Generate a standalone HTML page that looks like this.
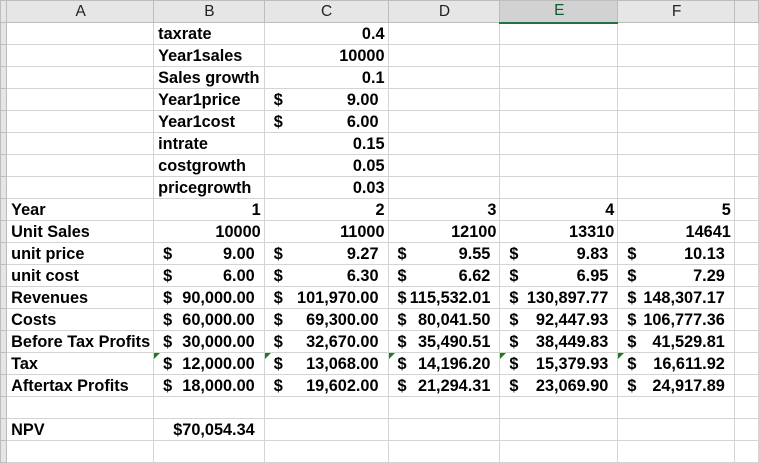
<!DOCTYPE html>
<html><head><meta charset="utf-8"><style>
*{margin:0;padding:0;box-sizing:border-box}
body{width:759px;height:463px;overflow:hidden;background:#fff;font-family:"Liberation Sans",Arial,sans-serif;}
table{border-collapse:collapse;table-layout:fixed;position:absolute;left:0;top:0}
td{height:22px;border:1px solid #d4d4d4;font-weight:bold;font-size:16.3px;color:#000;white-space:nowrap;overflow:visible;position:relative;padding:0 3px 0 4px;line-height:20px}
tr.h td{background:#e6e6e6;font-weight:normal;font-size:15.5px;text-align:center;border-color:#bdbdbd;color:#222}
tr.h td.sel{background:#d2d2d2;border-bottom:2px solid #217346;color:#0e5c2f}
td.rh{background:#e6e6e6;border-color:#bdbdbd;padding:0}
td.r{text-align:right}
td.m{padding:0 9px 0 9px}
.c{display:flex;justify-content:space-between}
.tri:before{content:"";position:absolute;left:0;top:0;border-top:6px solid #1e7e1e;border-right:6px solid transparent}
</style></head><body>
<table>
<colgroup><col style="width:8px"><col style="width:146px"><col style="width:111px"><col style="width:129px"><col style="width:113px"><col style="width:121px"><col style="width:119px"><col style="width:30px"></colgroup>
<tr class="h"><td class="rh"></td><td>A</td><td>B</td><td>C</td><td>D</td><td class="sel">E</td><td>F</td><td></td></tr>
<tr><td class="rh"></td><td></td><td>taxrate</td><td class="r">0.4</td><td></td><td></td><td></td><td></td></tr>
<tr><td class="rh"></td><td></td><td>Year1sales</td><td class="r">10000</td><td></td><td></td><td></td><td></td></tr>
<tr><td class="rh"></td><td></td><td>Sales growth</td><td class="r">0.1</td><td></td><td></td><td></td><td></td></tr>
<tr><td class="rh"></td><td></td><td>Year1price</td><td class="m"><div class="c"><span>$</span><span>9.00</span></div></td><td></td><td></td><td></td><td></td></tr>
<tr><td class="rh"></td><td></td><td>Year1cost</td><td class="m"><div class="c"><span>$</span><span>6.00</span></div></td><td></td><td></td><td></td><td></td></tr>
<tr><td class="rh"></td><td></td><td>intrate</td><td class="r">0.15</td><td></td><td></td><td></td><td></td></tr>
<tr><td class="rh"></td><td></td><td>costgrowth</td><td class="r">0.05</td><td></td><td></td><td></td><td></td></tr>
<tr><td class="rh"></td><td></td><td>pricegrowth</td><td class="r">0.03</td><td></td><td></td><td></td><td></td></tr>
<tr><td class="rh"></td><td>Year</td><td class="r">1</td><td class="r">2</td><td class="r">3</td><td class="r">4</td><td class="r">5</td><td></td></tr>
<tr><td class="rh"></td><td>Unit Sales</td><td class="r">10000</td><td class="r">11000</td><td class="r">12100</td><td class="r">13310</td><td class="r">14641</td><td></td></tr>
<tr><td class="rh"></td><td>unit price</td><td class="m"><div class="c"><span>$</span><span>9.00</span></div></td><td class="m"><div class="c"><span>$</span><span>9.27</span></div></td><td class="m"><div class="c"><span>$</span><span>9.55</span></div></td><td class="m"><div class="c"><span>$</span><span>9.83</span></div></td><td class="m"><div class="c"><span>$</span><span>10.13</span></div></td><td></td></tr>
<tr><td class="rh"></td><td>unit cost</td><td class="m"><div class="c"><span>$</span><span>6.00</span></div></td><td class="m"><div class="c"><span>$</span><span>6.30</span></div></td><td class="m"><div class="c"><span>$</span><span>6.62</span></div></td><td class="m"><div class="c"><span>$</span><span>6.95</span></div></td><td class="m"><div class="c"><span>$</span><span>7.29</span></div></td><td></td></tr>
<tr><td class="rh"></td><td>Revenues</td><td class="m"><div class="c"><span>$</span><span>90,000.00</span></div></td><td class="m"><div class="c"><span>$</span><span>101,970.00</span></div></td><td class="m"><div class="c"><span>$</span><span>115,532.01</span></div></td><td class="m"><div class="c"><span>$</span><span>130,897.77</span></div></td><td class="m"><div class="c"><span>$</span><span>148,307.17</span></div></td><td></td></tr>
<tr><td class="rh"></td><td>Costs</td><td class="m"><div class="c"><span>$</span><span>60,000.00</span></div></td><td class="m"><div class="c"><span>$</span><span>69,300.00</span></div></td><td class="m"><div class="c"><span>$</span><span>80,041.50</span></div></td><td class="m"><div class="c"><span>$</span><span>92,447.93</span></div></td><td class="m"><div class="c"><span>$</span><span>106,777.36</span></div></td><td></td></tr>
<tr><td class="rh"></td><td>Before Tax Profits</td><td class="m"><div class="c"><span>$</span><span>30,000.00</span></div></td><td class="m"><div class="c"><span>$</span><span>32,670.00</span></div></td><td class="m"><div class="c"><span>$</span><span>35,490.51</span></div></td><td class="m"><div class="c"><span>$</span><span>38,449.83</span></div></td><td class="m"><div class="c"><span>$</span><span>41,529.81</span></div></td><td></td></tr>
<tr><td class="rh"></td><td>Tax</td><td class="m tri"><div class="c"><span>$</span><span>12,000.00</span></div></td><td class="m tri"><div class="c"><span>$</span><span>13,068.00</span></div></td><td class="m tri"><div class="c"><span>$</span><span>14,196.20</span></div></td><td class="m tri"><div class="c"><span>$</span><span>15,379.93</span></div></td><td class="m tri"><div class="c"><span>$</span><span>16,611.92</span></div></td><td></td></tr>
<tr><td class="rh"></td><td>Aftertax Profits</td><td class="m"><div class="c"><span>$</span><span>18,000.00</span></div></td><td class="m"><div class="c"><span>$</span><span>19,602.00</span></div></td><td class="m"><div class="c"><span>$</span><span>21,294.31</span></div></td><td class="m"><div class="c"><span>$</span><span>23,069.90</span></div></td><td class="m"><div class="c"><span>$</span><span>24,917.89</span></div></td><td></td></tr>
<tr><td class="rh"></td><td></td><td></td><td></td><td></td><td></td><td></td><td></td></tr>
<tr><td class="rh"></td><td>NPV</td><td class="m r">$70,054.34</td><td></td><td></td><td></td><td></td><td></td></tr>
<tr><td class="rh"></td><td></td><td></td><td></td><td></td><td></td><td></td><td></td></tr>
</table>
</body></html>
